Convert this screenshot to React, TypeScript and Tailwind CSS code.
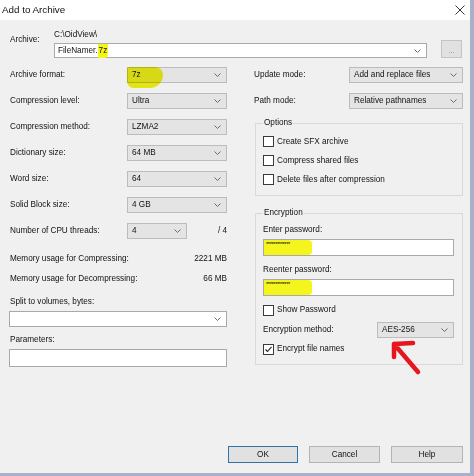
import React from "react";

const font = { fontFamily: '"Liberation Sans", Arial, sans-serif' };

function Chevron() {
  return (
    <svg width="7" height="4" viewBox="0 0 7 4" className="shrink-0">
      <path d="M0.5 0.5 L3.5 3.5 L6.5 0.5" fill="none" stroke="#6b6b6b" strokeWidth="1" />
    </svg>
  );
}

function Combo({
  value,
  className = "",
  white = false,
  children,
}: {
  value?: string;
  className?: string;
  white?: boolean;
  children?: React.ReactNode;
}) {
  return (
    <div
      className={`relative flex items-center h-[16px] pl-[4px] pr-[5px] border ${
        white ? "bg-white border-[#a9a9a9]" : "bg-[#e4e4e4] border-[#bcbcbc]"
      } ${className}`}
    >
      {children}
      <span className="flex-1 relative">{value}</span>
      <Chevron />
    </div>
  );
}

function Check({ label, checked = false }: { label: string; checked?: boolean }) {
  return (
    <div className="flex items-center gap-[3px] h-[12px]">
      <div className="w-[11px] h-[11px] border border-[#3a3a3a] bg-white flex items-center justify-center">
        {checked && (
          <svg width="9" height="9" viewBox="0 0 9 9">
            <path d="M1.5 4.5 L3.5 6.5 L7.5 1.8" fill="none" stroke="#222" strokeWidth="1.1" />
          </svg>
        )}
      </div>
      <span>{label}</span>
    </div>
  );
}

const leftRows = [
  { label: "Archive format:", value: "7z", mark: true },
  { label: "Compression level:", value: "Ultra" },
  { label: "Compression method:", value: "LZMA2" },
  { label: "Dictionary size:", value: "64 MB" },
  { label: "Word size:", value: "64" },
  { label: "Solid Block size:", value: "4 GB" },
];

export default function App() {
  return (
    <div
      className="relative w-[474px] h-[476px] flex flex-col bg-white border-r-[4px] border-b-[3px] border-[#a9b0c8] text-[8.2px] leading-[12px] text-[#111] overflow-hidden"
      style={font}
    >
      {/* Title bar */}
      <div className="h-[20px] shrink-0 flex items-center justify-between pl-[2px] pr-[5px] bg-white">
        <span className="text-[9.8px] text-[#111]">Add to Archive</span>
        <svg width="10" height="10" viewBox="0 0 10 10">
          <path d="M0.5 0.5 L9.5 9.5 M9.5 0.5 L0.5 9.5" stroke="#333" strokeWidth="1" />
        </svg>
      </div>

      {/* Body */}
      <div className="flex-1 flex flex-col bg-[#f0f0f0] pl-[9px] pr-[7px] pb-[10px]">
        {/* Archive row */}
        <div className="flex">
          <span className="w-[45px] pt-[14px] pl-[1px]">Archive:</span>
          <div className="flex flex-col w-[373px]">
            <span className="pt-[9px] h-[21px]">C:\OidView\</span>
            <div className="mt-[2px] h-[15px] flex items-center pl-[3px] pr-[5px] bg-white border border-[#a9a9a9]">
              <span className="flex-1 flex items-center">
                FileNamer.
                <span className="inline-flex items-center h-[14px] px-[1px] bg-[#f4f51c] rounded-br-[4px]">7z</span>
              </span>
              <Chevron />
            </div>
          </div>
          <div className="ml-[14px] mt-[20px] w-[21px] h-[18px] bg-[#e1e1e1] border border-[#c4c4c4] flex items-end justify-center pb-[2px] text-[#7a7a7a] text-[7px] leading-[8px]">
            ...
          </div>
        </div>

        {/* Two columns */}
        <div className="flex mt-[9px] gap-[27px]">
          {/* Left column */}
          <div className="w-[218px] flex flex-col">
            {leftRows.map((r) => (
              <div key={r.label} className="flex items-center h-[16px] mb-[10px]">
                <span className="w-[118px] pl-[1px]">{r.label}</span>
                <Combo className="w-[100px]" value={r.value}>
                  {r.mark && (
                    <span className="absolute left-[-1px] top-[-1px] w-[36px] h-[21px] bg-[#f2f318] rounded-tl-[3px] rounded-tr-[10px] rounded-br-[16px] rounded-bl-[8px] mix-blend-multiply" />
                  )}
                </Combo>
              </div>
            ))}
            <div className="flex items-center h-[16px] mb-[10px]">
              <span className="w-[118px] pl-[1px]">Number of CPU threads:</span>
              <Combo className="w-[60px]" value="4" />
              <span className="ml-auto">/ 4</span>
            </div>
            <div className="flex items-center justify-between h-[20px] pl-[1px]">
              <span>Memory usage for Compressing:</span>
              <span>2221 MB</span>
            </div>
            <div className="flex items-center justify-between h-[20px] pl-[1px]">
              <span>Memory usage for Decompressing:</span>
              <span>66 MB</span>
            </div>
            <span className="mt-[7px] pl-[1px]">Split to volumes, bytes:</span>
            <Combo className="mt-[3px]" white />
            <span className="mt-[7px] pl-[1px]">Parameters:</span>
            <div className="mt-[3px] h-[18px] bg-white border border-[#a9a9a9]" />
          </div>

          {/* Right column */}
          <div className="w-[209px] flex flex-col">
            <div className="flex items-center h-[16px] mb-[10px]">
              <span className="w-[95px]">Update mode:</span>
              <Combo className="w-[114px]" value="Add and replace files" />
            </div>
            <div className="flex items-center h-[16px]">
              <span className="w-[95px]">Path mode:</span>
              <Combo className="w-[114px]" value="Relative pathnames" />
            </div>

            <fieldset className="mt-[8px] ml-[1px] border border-[#d9d9d9] pl-[7px] pr-[8px] pt-[3px] pb-[6px]">
              <legend className="px-[1px] leading-[12px]">Options</legend>
              <div className="h-[19px] flex items-center">
                <Check label="Create SFX archive" />
              </div>
              <div className="h-[19px] flex items-center">
                <Check label="Compress shared files" />
              </div>
              <div className="h-[19px] flex items-center">
                <Check label="Delete files after compression" />
              </div>
            </fieldset>

            <fieldset className="mt-[11px] ml-[1px] border border-[#d9d9d9] pl-[7px] pr-[8px] pt-[5px] pb-[9px] flex flex-col">
              <legend className="px-[1px] leading-[12px]">Encryption</legend>
              <span>Enter password:</span>
              <div className="mt-[3px] h-[17px] bg-white border border-[#a9a9a9] flex">
                <div className="w-[48px] h-[15px] bg-[#f4f51c] rounded-r-[4px] pl-[2px] text-[6px] leading-[9px] tracking-[-0.5px]">
                  *************
                </div>
              </div>
              <span className="mt-[8px]">Reenter password:</span>
              <div className="mt-[3px] h-[17px] bg-white border border-[#a9a9a9] flex">
                <div className="w-[48px] h-[15px] bg-[#f4f51c] rounded-r-[4px] pl-[2px] text-[6px] leading-[9px] tracking-[-0.5px]">
                  *************
                </div>
              </div>
              <div className="mt-[8px]">
                <Check label="Show Password" />
              </div>
              <div className="mt-[6px] flex items-center h-[16px]">
                <span>Encryption method:</span>
                <Combo className="ml-auto w-[77px]" value="AES-256" />
              </div>
              <div className="mt-[5px]">
                <Check label="Encrypt file names" checked />
              </div>
            </fieldset>
          </div>
        </div>

        {/* Buttons */}
        <div className="mt-auto flex justify-end gap-[11px]">
          <div className="w-[70px] h-[17px] bg-[#e1e1e1] border-[1.5px] border-[#2f73aa] flex items-center justify-center">
            OK
          </div>
          <div className="w-[71px] h-[17px] bg-[#e1e1e1] border border-[#b4b4b4] flex items-center justify-center">
            Cancel
          </div>
          <div className="w-[72px] h-[17px] bg-[#e1e1e1] border border-[#b4b4b4] flex items-center justify-center">
            Help
          </div>
        </div>
      </div>

      {/* Red hand-drawn arrow */}
      <svg
        className="absolute left-[385px] top-[336px]"
        width="40"
        height="42"
        viewBox="0 0 40 42"
      >
        <path
          d="M9 8 L33 36 M9 8 L28 7 M9 8 L9 21"
          fill="none"
          stroke="#e5161c"
          strokeWidth="4.5"
          strokeLinecap="round"
          strokeLinejoin="round"
        />
      </svg>
    </div>
  );
}
